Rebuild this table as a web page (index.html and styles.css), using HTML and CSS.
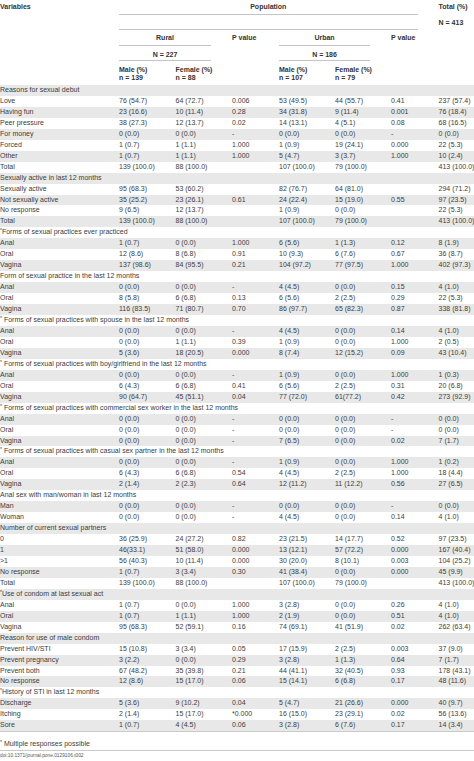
FILE: index.html
```html
<!DOCTYPE html>
<html>
<head>
<meta charset="utf-8">
<link rel="stylesheet" href="styles.css">
</head>
<body>
<div class="page">
<table class="t">
<colgroup>
<col class="c-var"><col class="c-m"><col class="c-f"><col class="c-p"><col class="c-um"><col class="c-uf"><col class="c-up"><col class="c-tot">
</colgroup>
<thead>
<tr class="h1"><th class="var" rowspan="5">Variables</th><th colspan="6" class="grp"><div class="ul">Population</div></th><th class="tot">Total (%)</th></tr>
<tr class="h2"><th colspan="6" class="grp"><div class="ul"></div></th><th class="tot">N = 413</th></tr>
<tr class="h3"><th colspan="2" class="grp"><div class="ul">Rural</div></th><th class="pv">P value</th><th colspan="2" class="grp"><div class="ul">Urban</div></th><th class="pv">P value</th><th></th></tr>
<tr class="h4"><th colspan="2" class="grp"><div class="ul">N = 227</div></th><th></th><th colspan="2" class="grp"><div class="ul">N = 186</div></th><th></th><th></th></tr>
<tr class="h5"><th class="sub">Male (%)<br>n = 139</th><th class="sub">Female (%)<br>n = 88</th><th></th><th class="sub">Male (%)<br>n = 107</th><th class="sub">Female (%)<br>n = 79</th><th></th><th></th></tr>
</thead>
<tbody>
<tr><td colspan="8" class="sec">Reasons for sexual debut</td></tr>
<tr><td>Love</td><td>76 (54.7)</td><td>64 (72.7)</td><td>0.006</td><td>53 (49.5)</td><td>44 (55.7)</td><td>0.41</td><td>237 (57.4)</td></tr>
<tr><td>Having fun</td><td>23 (16.6)</td><td>10 (11.4)</td><td>0.28</td><td>34 (31.8)</td><td>9 (11.4)</td><td>0.001</td><td>76 (18.4)</td></tr>
<tr><td>Peer pressure</td><td>38 (27.3)</td><td>12 (13.7)</td><td>0.02</td><td>14 (13.1)</td><td>4 (5.1)</td><td>0.08</td><td>68 (16.5)</td></tr>
<tr><td>For money</td><td>0 (0.0)</td><td>0 (0.0)</td><td>-</td><td>0 (0.0)</td><td>0 (0.0)</td><td>-</td><td>0 (0.0)</td></tr>
<tr><td>Forced</td><td>1 (0.7)</td><td>1 (1.1)</td><td>1.000</td><td>1 (0.9)</td><td>19 (24.1)</td><td>0.000</td><td>22 (5.3)</td></tr>
<tr><td>Other</td><td>1 (0.7)</td><td>1 (1.1)</td><td>1.000</td><td>5 (4.7)</td><td>3 (3.7)</td><td>1.000</td><td>10 (2.4)</td></tr>
<tr><td>Total</td><td>139 (100.0)</td><td>88 (100.0)</td><td></td><td>107 (100.0)</td><td>79 (100.0)</td><td></td><td>413 (100.0)</td></tr>
<tr><td colspan="8" class="sec">Sexually active in last 12 months</td></tr>
<tr><td>Sexually active</td><td>95 (68.3)</td><td>53 (60.2)</td><td></td><td>82 (76.7)</td><td>64 (81.0)</td><td></td><td>294 (71.2)</td></tr>
<tr><td>Not sexually active</td><td>35 (25.2)</td><td>23 (26.1)</td><td>0.61</td><td>24 (22.4)</td><td>15 (19.0)</td><td>0.55</td><td>97 (23.5)</td></tr>
<tr><td>No response</td><td>9 (6.5)</td><td>12 (13.7)</td><td></td><td>1 (0.9)</td><td>0 (0.0)</td><td></td><td>22 (5.3)</td></tr>
<tr><td>Total</td><td>139 (100.0)</td><td>88 (100.0)</td><td></td><td>107 (100.0)</td><td>79 (100.0)</td><td></td><td>413 (100.0)</td></tr>
<tr><td colspan="8" class="sec"><span class="ast">*</span>Forms of sexual practices ever practiced</td></tr>
<tr><td>Anal</td><td>1 (0.7)</td><td>0 (0.0)</td><td>1.000</td><td>6 (5.6)</td><td>1 (1.3)</td><td>0.12</td><td>8 (1.9)</td></tr>
<tr><td>Oral</td><td>12 (8.6)</td><td>8 (6.8)</td><td>0.91</td><td>10 (9.3)</td><td>6 (7.6)</td><td>0.67</td><td>36 (8.7)</td></tr>
<tr><td>Vagina</td><td>137 (98.6)</td><td>84 (95.5)</td><td>0.21</td><td>104 (97.2)</td><td>77 (97.5)</td><td>1.000</td><td>402 (97.3)</td></tr>
<tr><td colspan="8" class="sec">Form of sexual practice in the last 12 months</td></tr>
<tr><td>Anal</td><td>0 (0.0)</td><td>0 (0.0)</td><td>-</td><td>4 (4.5)</td><td>0 (0.0)</td><td>0.15</td><td>4 (1.0)</td></tr>
<tr><td>Oral</td><td>8 (5.8)</td><td>6 (6.8)</td><td>0.13</td><td>6 (5.6)</td><td>2 (2.5)</td><td>0.29</td><td>22 (5.3)</td></tr>
<tr><td>Vagina</td><td>116 (83.5)</td><td>71 (80.7)</td><td>0.70</td><td>86 (97.7)</td><td>65 (82.3)</td><td>0.87</td><td>338 (81.8)</td></tr>
<tr><td colspan="8" class="sec"><span class="ast">*</span> Forms of sexual practices with spouse in the last 12 months</td></tr>
<tr><td>Anal</td><td>0 (0.0)</td><td>0 (0.0)</td><td>-</td><td>4 (4.5)</td><td>0 (0.0)</td><td>0.14</td><td>4 (1.0)</td></tr>
<tr><td>Oral</td><td>0 (0.0)</td><td>1 (1.1)</td><td>0.39</td><td>1 (0.9)</td><td>0 (0.0)</td><td>1.000</td><td>2 (0.5)</td></tr>
<tr><td>Vagina</td><td>5 (3.6)</td><td>18 (20.5)</td><td>0.000</td><td>8 (7.4)</td><td>12 (15.2)</td><td>0.09</td><td>43 (10.4)</td></tr>
<tr><td colspan="8" class="sec"><span class="ast">*</span> Forms of sexual practices with boy/girlfriend in the last 12 months</td></tr>
<tr><td>Anal</td><td>0 (0.0)</td><td>0 (0.0)</td><td>-</td><td>1 (0.9)</td><td>0 (0.0)</td><td>1.000</td><td>1 (0.3)</td></tr>
<tr><td>Oral</td><td>6 (4.3)</td><td>6 (6.8)</td><td>0.41</td><td>6 (5.6)</td><td>2 (2.5)</td><td>0.31</td><td>20 (6.8)</td></tr>
<tr><td>Vagina</td><td>90 (64.7)</td><td>45 (51.1)</td><td>0.04</td><td>77 (72.0)</td><td>61(77.2)</td><td>0.42</td><td>273 (92.9)</td></tr>
<tr><td colspan="8" class="sec"><span class="ast">*</span> Forms of sexual practices with commercial sex worker in the last 12 months</td></tr>
<tr><td>Anal</td><td>0 (0.0)</td><td>0 (0.0)</td><td>-</td><td>0 (0.0)</td><td>0 (0.0)</td><td>-</td><td>0 (0.0)</td></tr>
<tr><td>Oral</td><td>0 (0.0)</td><td>0 (0.0)</td><td>-</td><td>0 (0.0)</td><td>0 (0.0)</td><td>-</td><td>0 (0.0)</td></tr>
<tr><td>Vagina</td><td>0 (0.0)</td><td>0 (0.0)</td><td>-</td><td>7 (6.5)</td><td>0 (0.0)</td><td>0.02</td><td>7 (1.7)</td></tr>
<tr><td colspan="8" class="sec"><span class="ast">*</span> Forms of sexual practices with casual sex partner in the last 12 months</td></tr>
<tr><td>Anal</td><td>0 (0.0)</td><td>0 (0.0)</td><td>-</td><td>1 (0.9)</td><td>0 (0.0)</td><td>1.000</td><td>1 (0.2)</td></tr>
<tr><td>Oral</td><td>6 (4.3)</td><td>6 (6.8)</td><td>0.54</td><td>4 (4.5)</td><td>2 (2.5)</td><td>1.000</td><td>18 (4.4)</td></tr>
<tr><td>Vagina</td><td>2 (1.4)</td><td>2 (2.3)</td><td>0.64</td><td>12 (11.2)</td><td>11 (12.2)</td><td>0.56</td><td>27 (6.5)</td></tr>
<tr><td colspan="8" class="sec">Anal sex with man/woman in last 12 months</td></tr>
<tr><td>Man</td><td>0 (0.0)</td><td>0 (0.0)</td><td>-</td><td>0 (0.0)</td><td>0 (0.0)</td><td>-</td><td>0 (0.0)</td></tr>
<tr><td>Woman</td><td>0 (0.0)</td><td>0 (0.0)</td><td>-</td><td>4 (4.5)</td><td>0 (0.0)</td><td>0.14</td><td>4 (1.0)</td></tr>
<tr><td colspan="8" class="sec">Number of current sexual partners</td></tr>
<tr><td>0</td><td>36 (25.9)</td><td>24 (27.2)</td><td>0.82</td><td>23 (21.5)</td><td>14 (17.7)</td><td>0.52</td><td>97 (23.5)</td></tr>
<tr><td>1</td><td>46(33.1)</td><td>51 (58.0)</td><td>0.000</td><td>13 (12.1)</td><td>57 (72.2)</td><td>0.000</td><td>167 (40.4)</td></tr>
<tr><td>&gt;1</td><td>56 (40.3)</td><td>10 (11.4)</td><td>0.000</td><td>30 (20.0)</td><td>8 (10.1)</td><td>0.003</td><td>104 (25.2)</td></tr>
<tr><td>No response</td><td>1 (0.7)</td><td>3 (3.4)</td><td>0.30</td><td>41 (38.4)</td><td>0 (0.0)</td><td>0.000</td><td>45 (9.9)</td></tr>
<tr><td>Total</td><td>139 (100.0)</td><td>88 (100.0)</td><td></td><td>107 (100.0)</td><td>79 (100.0)</td><td></td><td>413 (100.0)</td></tr>
<tr><td colspan="8" class="sec"><span class="ast">*</span>Use of condom at last sexual act</td></tr>
<tr><td>Anal</td><td>1 (0.7)</td><td>0 (0.0)</td><td>1.000</td><td>3 (2.8)</td><td>0 (0.0)</td><td>0.26</td><td>4 (1.0)</td></tr>
<tr><td>Oral</td><td>1 (0.7)</td><td>1 (1.1)</td><td>1.000</td><td>2 (1.9)</td><td>0 (0.0)</td><td>0.51</td><td>4 (1.0)</td></tr>
<tr><td>Vagina</td><td>95 (68.3)</td><td>52 (59.1)</td><td>0.16</td><td>74 (69.1)</td><td>41 (51.9)</td><td>0.02</td><td>262 (63.4)</td></tr>
<tr><td colspan="8" class="sec">Reason for use of male condom</td></tr>
<tr><td>Prevent HIV/STI</td><td>15 (10.8)</td><td>3 (3.4)</td><td>0.05</td><td>17 (15.9)</td><td>2 (2.5)</td><td>0.003</td><td>37 (9.0)</td></tr>
<tr><td>Prevent pregnancy</td><td>3 (2.2)</td><td>0 (0.0)</td><td>0.29</td><td>3 (2.8)</td><td>1 (1.3)</td><td>0.64</td><td>7 (1.7)</td></tr>
<tr><td>Prevent both</td><td>67 (48.2)</td><td>35 (39.8)</td><td>0.21</td><td>44 (41.1)</td><td>32 (40.5)</td><td>0.93</td><td>178 (43.1)</td></tr>
<tr><td>No response</td><td>12 (8.6)</td><td>15 (17.0)</td><td>0.06</td><td>15 (14.1)</td><td>6 (6.8)</td><td>0.17</td><td>48 (11.6)</td></tr>
<tr><td colspan="8" class="sec"><span class="ast">*</span>History of STI in last 12 months</td></tr>
<tr><td>Discharge</td><td>5 (3.6)</td><td>9 (10.2)</td><td>0.04</td><td>5 (4.7)</td><td>21 (26.6)</td><td>0.000</td><td>40 (9.7)</td></tr>
<tr><td>Itching</td><td>2 (1.4)</td><td>15 (17.0)</td><td>*0.000</td><td>16 (15.0)</td><td>23 (29.1)</td><td>0.02</td><td>56 (13.6)</td></tr>
<tr><td>Sore</td><td>1 (0.7)</td><td>4 (4.5)</td><td>0.06</td><td>3 (2.8)</td><td>6 (7.6)</td><td>0.17</td><td>14 (3.4)</td></tr>
</tbody>
</table>
<p class="note"><span class="ast">*</span> Multiple responses possible</p>
<p class="doi">doi:10.1371/journal.pone.0129106.t002</p>
</div>
</body>
</html>
```
FILE: styles.css
```css
html, body {
  margin: 0;
  padding: 0;
  background: #ffffff;
}
body {
  width: 474px;
  height: 761px;
  overflow: hidden;
  font-family: "Liberation Sans", Arial, sans-serif;
  color: #3d3d3d;
}
.page {
  width: 474px;
}
.t {
  width: 474px;
  table-layout: fixed;
  border-collapse: collapse;
  border-spacing: 0;
  font-size: 7px;
  border-bottom: 1px solid #c9c9c9;
}
.c-var { width: 119px; }
.c-m { width: 56.5px; }
.c-f { width: 56.5px; }
.c-p { width: 47px; }
.c-um { width: 56px; }
.c-uf { width: 56px; }
.c-up { width: 47.5px; }
.c-tot { width: 35.5px; }

.t th {
  padding: 0;
  font-weight: bold;
  color: #333333;
  text-align: left;
  vertical-align: top;
  white-space: nowrap;
  height: 15px;
  line-height: 14px;
}
.t th.var {
  vertical-align: top;
}
.t th.grp {
  padding-right: 21px;
}
.ul {
  height: 15px;
  box-sizing: border-box;
  border-bottom: 1px solid #c4c4c4;
  text-align: center;
  line-height: 14px;
}
.h4 .ul {
  line-height: 17px;
}
.h4 th {
  line-height: 17px;
}
.h2 th.tot {
  line-height: 16px;
}
.h5 th {
  height: 24px;
  line-height: 8px;
  padding: 5px 0 3px 0;
  box-sizing: border-box;
}

.t td {
  padding: 0;
  height: 10.95px;
  line-height: 10.95px;
  white-space: nowrap;
  overflow: visible;
  vertical-align: middle;
}
.t tbody tr:nth-child(odd) {
  background: #e8e8e8;
}
.ast {
  font-size: 5px;
  vertical-align: 2px;
  line-height: 0;
}
.note {
  margin: 0;
  padding: 7px 0 1.5px 0;
  font-size: 7px;
  line-height: 9px;
  border-bottom: 1px solid #c9c9c9;
}
.doi {
  margin: 0;
  padding-top: 2px;
  font-size: 4.8px;
  line-height: 6px;
  color: #555555;
}
```
